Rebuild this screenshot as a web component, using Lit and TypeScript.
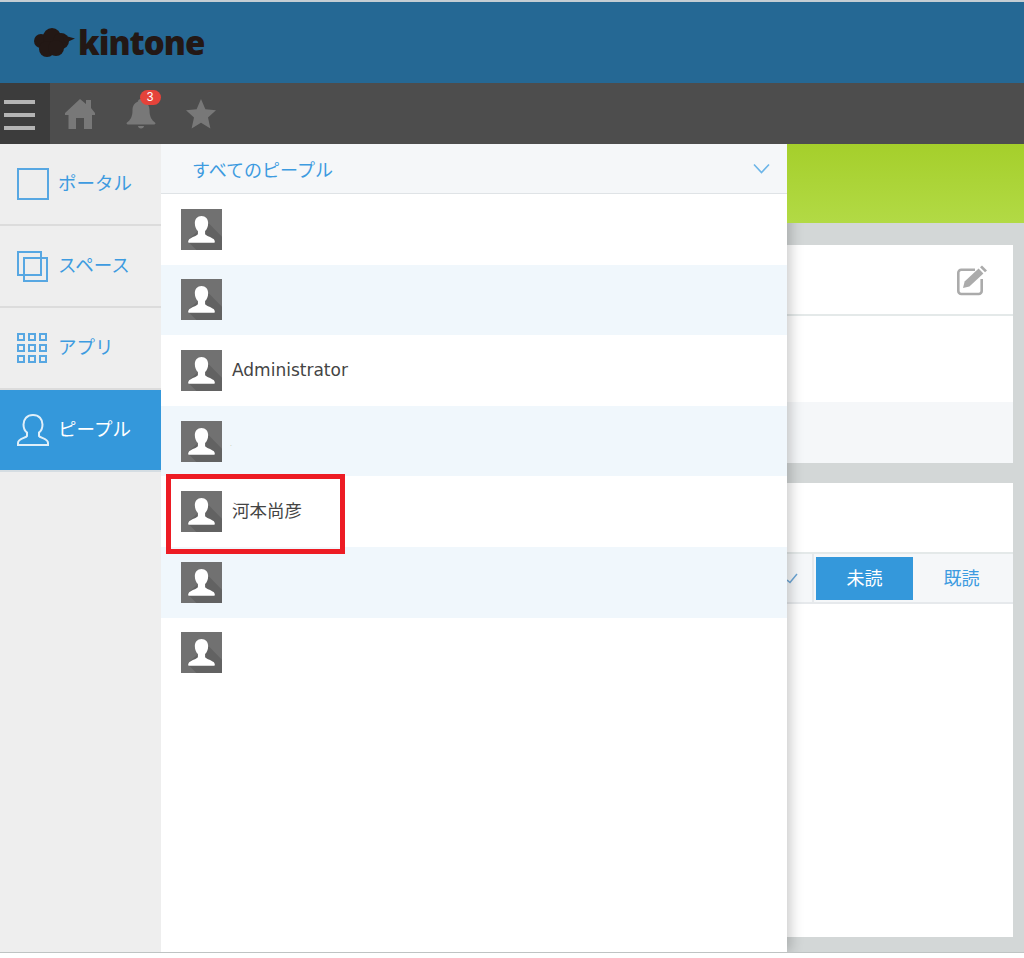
import { LitElement, html, css, svg } from "lit";
import { customElement } from "lit/decorators.js";

const avatar = html`<svg class="avatar" viewBox="0 0 40 40" aria-hidden="true">
  <rect width="40" height="40" fill="#717171"/>
  <path d="M26 13 40 27V40H15L6 31Z" fill="#626262"/>
  <path d="M20 6.800c-4 0-6.500 3-6.500 7 0 3.300 1.300 6 3 7.700v2.800c-.8 1.800-6 3-8.300 5-.9.800-1.200 2-1.200 2.700 0 .7.400 1 1 1h24c.6 0 1-.3 1-1 0-.7-.3-1.900-1.200-2.700-2.300-2-7.500-3.200-8.300-5v-2.800c1.700-1.700 3-4.400 3-7.700 0-4-2.500-7-6.500-7Z" fill="#fff"/>
</svg>`;

const rows: { name: string; cls?: string }[] = [
  { name: "" },
  { name: "" },
  { name: "Administrator", cls: "latin" },
  { name: ".", cls: "dot" },
  { name: "河本尚彦" },
  { name: "" },
  { name: "" },
];

const appCells = [0, 11, 22].flatMap((y) =>
  [0, 11, 22].map((x) => svg`<rect x="${x + 1}" y="${y + 1}" width="6" height="6"/>`)
);

@customElement("app-root")
export class AppRoot extends LitElement {
  static styles = css`
    :host {
      display: block;
      position: relative;
      width: 1024px;
      height: 958px;
      overflow: hidden;
      background: #fff;
      font-family: "Noto Sans CJK JP", "Liberation Sans", sans-serif;
    }
    svg { display: block; flex: none; }
    .header {
      height: 81px;
      border-top: 2px solid #c4cdd3;
      background: #256894;
      display: flex;
      align-items: center;
      padding-left: 34px;
      gap: 3px;
    }
    .wordmark {
      font-family: "Open Sans", "Noto Sans", sans-serif;
      font-weight: 800;
      font-size: 33px;
      line-height: 40px;
      color: #231815;
      letter-spacing: -1px;
      margin-top: 1px;
    }
    .toolbar {
      height: 61px;
      background: #4d4d4d;
      display: flex;
      align-items: center;
    }
    .menu {
      width: 50px;
      height: 61px;
      background: #3c3c3c;
      display: flex;
      flex-direction: column;
      gap: 9px;
      padding: 17px 0 0 4px;
      box-sizing: border-box;
    }
    .menu span { display: block; width: 31px; height: 4px; background: #b4b4b4; }
    .tools { display: flex; padding-left: 15px; gap: 30.500px; }
    .tool { position: relative; width: 30px; height: 30px; }
    .badge {
      position: absolute;
      left: 14px;
      top: -9px;
      width: 21px;
      height: 15px;
      border-radius: 8px;
      background: #e5433a;
      color: #fff;
      font-size: 12px;
      line-height: 15px;
      text-align: center;
      font-family: "Liberation Sans", sans-serif;
    }
    .main {
      display: grid;
      grid-template-columns: 161px 626px 1fr;
      height: 808px;
      border-bottom: 1px solid #bfc3c3;
      overflow: hidden;
    }
    .side { background: #eeeeee; }
    .nav {
      height: 80px;
      border-bottom: 2px solid #dcdcdc;
      display: flex;
      align-items: center;
      padding-left: 17px;
      gap: 9px;
      color: #3d9be0;
      font-size: 18.500px;
    }
    .nav span { margin-top: -4px; }
    .nav.active {
      background: #3498db;
      color: #fff;
      border-bottom-color: #d5dde2;
    }
    .nav svg { fill: none; stroke: currentColor; stroke-width: 2; opacity: 0.85; }
    .panel {
      background: #fff;
      position: relative;
      z-index: 2;
      box-shadow: 4px 0 12px rgba(0, 0, 0, 0.2);
      clip-path: inset(0 -20px 0 0);
    }
    .panel-head {
      height: 49px;
      background: #f5f7f9;
      border-bottom: 1px solid #dfe3e6;
      display: flex;
      align-items: center;
      justify-content: space-between;
      padding: 0 17px 0 31px;
      color: #3d9be0;
      font-size: 18px;
    }
    .row {
      height: 70.600px;
      display: flex;
      align-items: center;
      padding-left: 20px;
      gap: 10px;
      color: #444;
      font-size: 17.500px;
    }
    .row:nth-child(even) { background: #f0f7fc; }
    .row span { margin-top: -4px; }
    .row .latin { font-family: "DejaVu Sans", sans-serif; font-size: 17px; margin-top: 0; }
    .row .dot { font-size: 7px; color: #cfcfc0; margin-top: 4px; margin-left: -2px; }
    .avatar { width: 41px; height: 41px; }
    .content { background: #d3d7d7; padding-right: 11px; display: flex; flex-direction: column; }
    .banner {
      height: 79px;
      margin-right: -11px;
      background: linear-gradient(#a5cf2b, #b2da45);
      position: relative;
      z-index: 3;
    }
    .card { background: #fff; display: flex; flex-direction: column; }
    .card-a { height: 218px; margin-top: 22px; }
    .card-b { height: 454px; margin-top: 20px; }
    .card-head {
      height: 71px;
      flex: none;
      border-bottom: 2px solid #e4e9e9;
      box-sizing: border-box;
      display: flex;
      align-items: center;
      justify-content: flex-end;
      padding-right: 25px;
    }
    .card-a .card-body { flex: 1; }
    .card-foot { height: 61px; background: #f5f7f9; }
    .tabs {
      height: 50px;
      background: #f5f7f9;
      border-bottom: 2px solid #e6e9ec;
      display: flex;
      align-items: center;
      box-sizing: border-box;
    }
    .check { width: 27px; height: 100%; border-right: 2px solid #e6e9ec; box-sizing: border-box; display: flex; align-items: center; }
    .tab {
      width: 97px;
      height: 43px;
      display: flex;
      align-items: center;
      justify-content: center;
      font-size: 18px;
      color: #3d9be0;
    }
    .tab.on { background: #3498db; color: #fff; margin-left: 2px; }
    .tab span { margin-top: -2px; }
    .highlight {
      position: absolute;
      left: 166px;
      top: 474px;
      width: 179px;
      height: 80px;
      box-sizing: border-box;
      border: 5px solid #ed1c24;
      z-index: 4;
    }
  `;

  render() {
    return html`
      <div class="header">
        <svg width="41" height="30" viewBox="0 0 41 30" aria-hidden="true">
          <g fill="#231815">
            <circle cx="7" cy="13" r="7"/>
            <circle cx="18" cy="9" r="9"/>
            <circle cx="27" cy="13" r="8"/>
            <circle cx="13" cy="21" r="8"/>
            <circle cx="22" cy="20" r="8"/>
            <path d="M28 7 41 10.500 31 15Z"/>
          </g>
        </svg>
        <span class="wordmark">kintone</span>
      </div>
      <div class="toolbar">
        <div class="menu"><span></span><span></span><span></span></div>
        <div class="tools">
          <div class="tool">
            <svg width="30" height="30" viewBox="0 0 30 30" fill="#787878" aria-hidden="true">
              <path d="M15 0 21 5V1H26V9L30 14V16H27V30H19V19H11V30H3.500V16H0V14Z"/>
            </svg>
          </div>
          <div class="tool">
            <svg width="30" height="30" viewBox="0 0 30 30" fill="#787878" aria-hidden="true">
              <path d="M15 0c2 0 3 1 3 2.500 4 1.500 5.500 5 5.500 9 0 6 2 9.500 6 12.500 0 1-1 1.500-2 1.500H2.500c-1 0-2-.5-2-1.500 4-3 6-6.500 6-12.500 0-4 1.500-7.500 5.500-9C12 1 13 0 15 0Z"/>
              <path d="M12 27h6c0 1.500-1.300 2.500-3 2.500S12 28.500 12 27Z"/>
            </svg>
            <span class="badge">3</span>
          </div>
          <div class="tool">
            <svg width="30" height="30" viewBox="0 0 30 30" fill="#787878" aria-hidden="true">
              <path d="M15 0 19.400 10.300 30 11.300 22 18.500 24.400 29.500 15 23.700 5.600 29.500 8 18.500 0 11.300 10.600 10.300Z"/>
            </svg>
          </div>
        </div>
      </div>
      <div class="main">
        <nav class="side">
          <div class="nav">
            <svg width="32" height="32" viewBox="0 0 32 32" aria-hidden="true"><rect x="1" y="1" width="30" height="30"/></svg>
            <span>ポータル</span>
          </div>
          <div class="nav">
            <svg width="32" height="31" viewBox="0 0 32 31" aria-hidden="true"><rect x="1" y="1" width="23" height="23"/><rect x="7" y="7" width="23" height="23"/></svg>
            <span>スペース</span>
          </div>
          <div class="nav">
            <svg width="32" height="30" viewBox="0 0 32 30" aria-hidden="true">${appCells}</svg>
            <span>アプリ</span>
          </div>
          <div class="nav active">
            <svg width="32" height="32" viewBox="0 0 32 32" aria-hidden="true">
              <path d="M16 1c-6 0-9.500 4-9.500 9.500 0 3.500 1.500 6.500 3.500 8v3.500c-1 2-9 2.500-9 7V31h30v-2c0-4.500-8-5-9-7v-3.500c2-1.500 3.500-4.500 3.500-8C25.500 5 22 1 16 1Z"/>
            </svg>
            <span>ピープル</span>
          </div>
        </nav>
        <section class="panel">
          <div class="panel-head">
            <span>すべてのピープル</span>
            <svg width="17" height="11" viewBox="0 0 17 11" fill="none" stroke="#6cb5e8" stroke-width="1.600" aria-hidden="true"><path d="M1 1.500 8.500 9.500 16 1.500"/></svg>
          </div>
          <div>
            ${rows.map(
              (r) => html`<div class="row">
                ${avatar}
                ${r.name ? html`<span class=${r.cls ?? ""}>${r.name}</span>` : ""}
              </div>`
            )}
          </div>
        </section>
        <section class="content">
          <div class="banner"></div>
          <div class="card card-a">
            <div class="card-head">
              <svg width="31" height="32" viewBox="0 0 31 32" aria-hidden="true">
                <path d="M24.700 15V27a3 3 0 0 1-3 3H4.300a3 3 0 0 1-3-3V8.800a3 3 0 0 1 3-3H18" fill="none" stroke="#ababab" stroke-width="2.600"/>
                <path d="M6 24 7.600 17.500 21.600 4.500 26.400 9.500 12.400 22.500Z" fill="#ababab"/>
                <path d="M23 3.300 25 1.500 30 6.500 28 8.300Z" fill="#ababab"/>
              </svg>
            </div>
            <div class="card-body"></div>
            <div class="card-foot"></div>
          </div>
          <div class="card card-b">
            <div class="card-head"></div>
            <div class="tabs">
              <div class="check">
                <svg width="11" height="11" viewBox="0 0 11 11" fill="none" stroke="#6ca6d6" stroke-width="1.500" aria-hidden="true"><path d="M0 7 3 9.500 10 1"/></svg>
              </div>
              <div class="tab on"><span>未読</span></div>
              <div class="tab"><span>既読</span></div>
            </div>
          </div>
        </section>
      </div>
      <div class="highlight"></div>
    `;
  }
}
